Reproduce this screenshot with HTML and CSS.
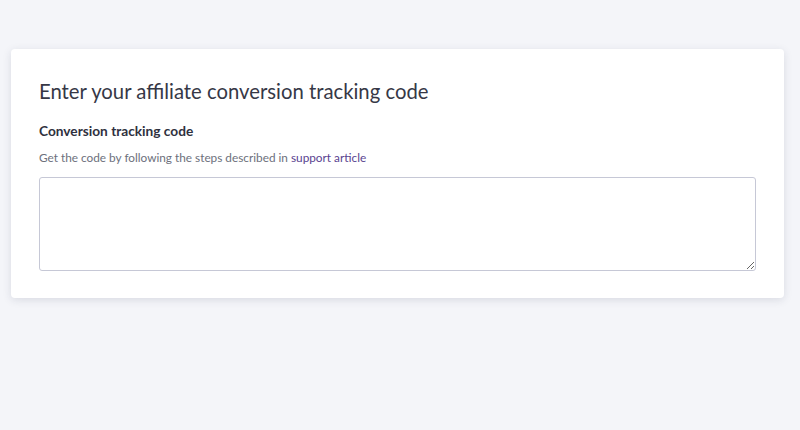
FILE: index.html
```html
<!DOCTYPE html>
<html lang="en">
<head>
<meta charset="UTF-8" />
<meta name="viewport" content="width=device-width, initial-scale=1" />
<title>Affiliate tracking</title>
<link rel="stylesheet" href="styles.css">
</head>
<body>

<div class="card">
  <h1>Enter your affiliate conversion tracking code</h1>
  <label class="label" for="codigo">Conversion tracking code</label>
  <p class="hint">Get the code by following the steps described in <a href="#">support article</a></p>
  <textarea id="codigo" class="code"></textarea>
</div>

</body>
</html>
```

FILE: styles.css
```css
body {
  margin: 0;
  padding: 49px 16px 0 11px;
  height: 100vh;
  box-sizing: border-box;
  background: #f4f5f9;
  font-family: Lato, sans-serif;
  color: #2f3140;
}

.card {
  background: #fff;
  border-radius: 4px;
  box-shadow: 0 2px 8px rgba(40, 45, 80, 0.13);
  padding: 28px 28px 27px 28px;
}

.card h1 {
  margin: 0 0 17px;
  font-size: 20.3px;
  font-weight: 400;
  line-height: 28px;
  color: #363846;
}

.label {
  display: block;
  font-size: 13.7px;
  font-weight: 700;
  line-height: 18px;
  color: #2f3140;
}

.hint {
  margin: 10px 0 11px;
  font-size: 11.8px;
  line-height: 16px;
  color: #6d707c;
}

.hint a {
  color: #5a4390;
  text-decoration: none;
}

.code {
  display: block;
  width: 100%;
  height: 94px;
  box-sizing: border-box;
  border: 1px solid #c6c8d6;
  border-radius: 3px;
  font-family: Lato, sans-serif;
  font-size: 13px;
}
```
